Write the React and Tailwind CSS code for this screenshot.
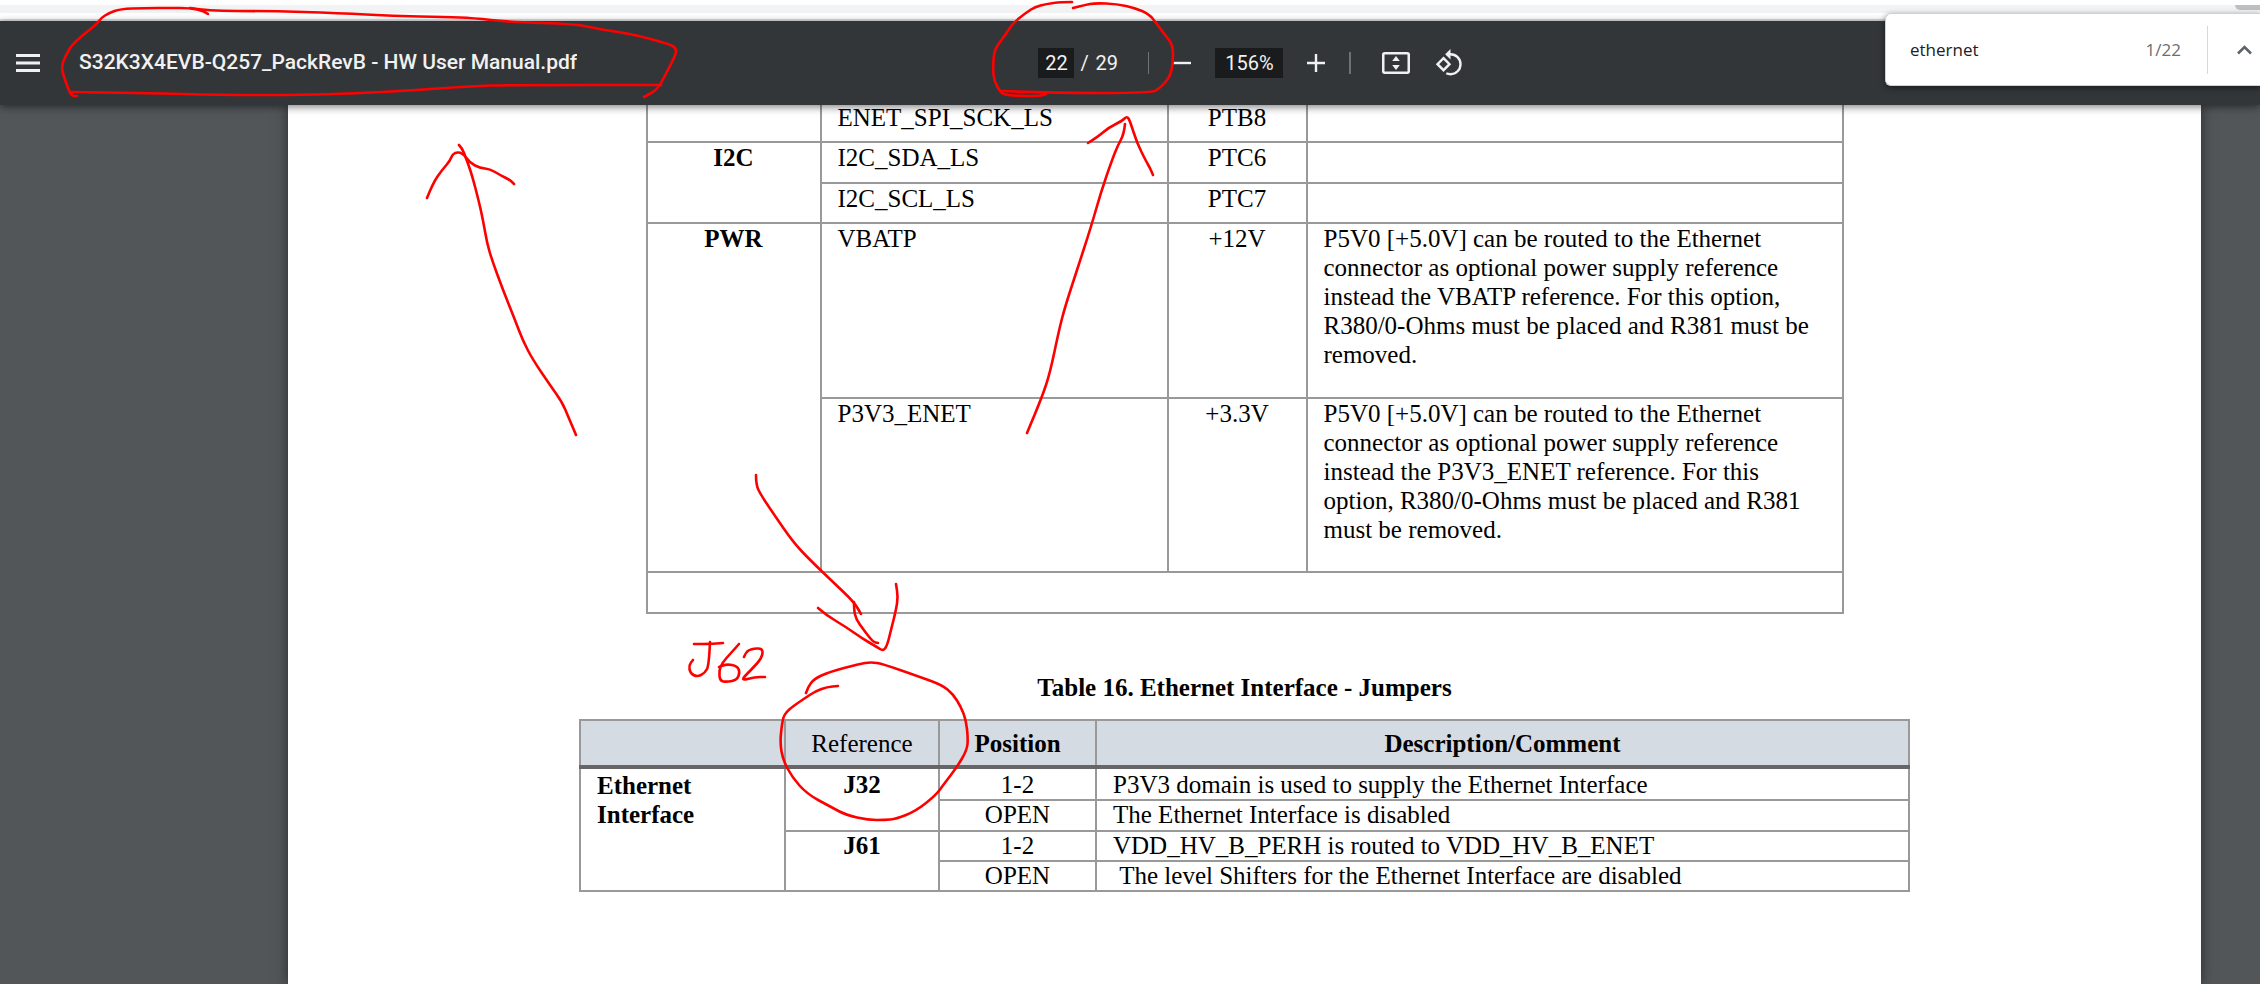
import { useState } from "react";

// red pen strokes, each a list of x,y points
const STROKES = [
  // file name
  [[208, 14], [204, 11], [190, 8], [170, 8], [145, 8], [120, 9], [109, 13], [101, 18], [97, 24], [73, 43], [66, 55], [61, 67], [65, 80], [71, 96], [77, 96]],
  [[190, 8], [207, 11], [268, 11], [339, 13], [393, 16], [446, 17], [473, 18], [509, 22], [576, 24], [598, 29], [625, 33], [643, 37], [669, 44], [676, 48], [676, 54], [669, 68], [660, 85], [655, 91], [644, 97]],
  [[71, 92], [143, 93], [223, 95], [286, 95], [339, 94], [402, 91], [473, 86], [509, 85], [661, 85]],
  // page number
  [[1072, 2], [1061, 2], [1046, 4], [1035, 7], [1027, 12], [1013, 23], [1006, 34], [997, 46], [994, 53], [993, 68], [994, 81], [1001, 93], [1007, 95], [1020, 96], [1040, 96], [1046, 94]],
  [[1001, 91], [1046, 93], [1152, 93], [1160, 88], [1170, 77], [1173, 63], [1173, 45], [1165, 35], [1157, 24], [1149, 14], [1135, 8], [1117, 4], [1095, 3], [1085, 5], [1073, 8]],
  // arrow to the file name
  [[459, 145], [462, 148], [466, 158], [472, 175], [479, 202], [483, 220], [487, 243], [492, 260], [503, 290], [515, 320], [523, 341], [533, 360], [550, 385], [562, 402], [568, 416], [576, 435]],
  [[427, 198], [433, 183], [442, 170], [450, 161], [453, 153], [462, 152], [470, 163], [480, 168], [490, 169], [500, 175], [510, 180], [514, 184]],
  // arrow to the page number
  [[1125, 124], [1124, 134], [1118, 145], [1112, 160], [1101, 192], [1091, 227], [1077, 270], [1065, 307], [1059, 330], [1050, 373], [1042, 397], [1027, 433]],
  [[1088, 143], [1099, 136], [1108, 128], [1122, 121], [1127, 116], [1130, 121], [1137, 143], [1146, 161], [1150, 168], [1153, 175]],
  // arrow to the jumper
  [[756, 475], [756, 485], [761, 495], [773, 513], [793, 542], [810, 560], [834, 583], [854, 602], [861, 614]],
  [[854, 602], [854, 610], [856, 619], [863, 629], [873, 642], [878, 643]],
  [[818, 608], [826, 615], [846, 627], [863, 639], [877, 647], [883, 651], [887, 646], [891, 630], [896, 610], [898, 597], [896, 584]],
  // J62 note
  [[694, 644], [710, 644], [723, 643]],
  [[710, 642], [709, 665], [705, 673], [697, 677], [690, 673], [689, 665], [693, 660]],
  [[739, 644], [731, 653], [722, 663], [719, 671], [720, 681], [727, 682], [737, 680], [740, 672], [737, 666], [727, 664], [719, 667]],
  [[744, 657], [746, 652], [751, 649], [763, 648], [762, 658], [751, 670], [740, 681], [755, 677], [765, 677]],
  // circled jumper
  [[806, 693], [808, 687], [814, 679], [829, 672], [859, 664], [871, 662], [883, 664], [920, 677], [942, 685], [953, 694], [961, 707], [966, 720], [968, 738], [967, 750], [957, 767], [944, 784], [936, 795], [916, 811], [896, 819], [885, 820], [868, 820], [846, 815], [831, 807], [807, 794], [792, 777], [783, 760], [780, 743], [782, 723], [785, 712], [805, 698], [816, 691], [827, 687], [838, 686]],
];

function toPath(points) {
  let d = `M${points[0][0]} ${points[0][1]}`;
  for (let i = 1; i < points.length - 1; i++) {
    const [x, y] = points[i];
    const [nx, ny] = points[i + 1];
    // curve through the midpoints so the pen line stays smooth
    d += ` Q${x} ${y} ${(x + nx) / 2} ${(y + ny) / 2}`;
  }
  const last = points[points.length - 1];
  return `${d} L${last[0]} ${last[1]}`;
}

function Ink() {
  return (
    <svg
      aria-hidden="true"
      width="2260"
      height="984"
      viewBox="0 0 2260 984"
      className="pointer-events-none absolute left-0 top-0 z-30 max-w-none fill-none stroke-[#ff0000]"
      strokeWidth="2.6"
      strokeLinecap="round"
      strokeLinejoin="round"
    >
      {STROKES.map((points, i) => (
        <path key={i} d={toPath(points)} />
      ))}
    </svg>
  );
}

function FindBar() {
  const [query, setQuery] = useState("ethernet");

  return (
    <div className="absolute right-0 top-[13px] z-20 flex h-[73px] w-[375px] items-center rounded-l-md border border-r-0 border-[#d0d1d2] bg-white pl-6 font-['Open_Sans','Noto_Sans',sans-serif] text-[17px] shadow-[0_2px_6px_rgba(0,0,0,0.45)]">
      <input
        type="text"
        aria-label="Find in page"
        value={query}
        onChange={(e) => setQuery(e.target.value)}
        className="w-0 flex-1 bg-transparent text-[#202124] outline-none"
      />
      <span className="text-[#6b6e72]">1/22</span>
      <span className="ml-[26px] h-12 w-px bg-[#d5d7da]" />
      <button aria-label="Previous match" className="ml-6 flex h-12 w-7 items-center justify-start">
        <svg width="24" height="24" viewBox="0 0 24 24" fill="none" stroke="#5f6368" strokeWidth="2.6">
          <path d="M6 15.500l6.500-6.500 6.500 6.500" />
        </svg>
      </button>
    </div>
  );
}

function Toolbar() {
  const [page, setPage] = useState("22");
  const [zoom, setZoom] = useState("156%");

  return (
    <header className="relative z-10 flex h-[84px] items-center bg-[#323639] pl-4 font-[Roboto,sans-serif] text-[20px] text-[#f1f1f1] shadow-[0_2px_8px_rgba(0,0,0,0.5)]">
      <div className="flex min-w-0 flex-[1023] items-center gap-[39px]">
        <button aria-label="Menu">
          <svg width="24" height="18" viewBox="0 0 24 18" fill="#f1f1f1">
            <path d="M0 0h24v3H0zM0 7.500h24v3H0zM0 15h24v3H0z" />
          </svg>
        </button>
        <h1 className="truncate text-[21px] font-medium">
          S32K3X4EVB-Q257_PackRevB - HW User Manual.pdf
        </h1>
      </div>
      <div className="flex shrink-0 items-center">
        <input
          type="text"
          aria-label="Page number"
          value={page}
          onChange={(e) => setPage(e.target.value)}
          className="h-[30px] w-9 bg-[#191b1c] text-center outline-none"
        />
        <span className="ml-1.5 w-[9px]">/</span>
        <span className="ml-1.5 w-[23px]">29</span>
        <span className="ml-[30px] h-[22px] w-px bg-[#6f7274]" />
        <button aria-label="Zoom out" className="ml-6">
          <svg width="18" height="18" viewBox="0 0 18 18" fill="#f1f1f1">
            <path d="M0 7.800h18v2.400H0z" />
          </svg>
        </button>
        <input
          type="text"
          aria-label="Zoom level"
          value={zoom}
          onChange={(e) => setZoom(e.target.value)}
          className="ml-6 h-[30px] w-[68px] bg-[#191b1c] text-center outline-none"
        />
        <button aria-label="Zoom in" className="ml-6">
          <svg width="18" height="18" viewBox="0 0 18 18" fill="#f1f1f1">
            <path d="M0 7.800h7.800V0h2.400v7.800H18v2.400h-7.800V18H7.800v-7.800H0z" />
          </svg>
        </button>
        <span className="ml-6 h-[22px] w-0.5 bg-[#6f7274]" />
        <button aria-label="Fit to page" className="ml-[30px]">
          <svg width="30" height="24" viewBox="0 0 30 24" fill="#f1f1f1">
            <rect x="2.250" y="2.250" width="25.500" height="19.500" rx="1.500" fill="none" stroke="#f1f1f1" strokeWidth="2.500" />
            <path d="M15 5l3.800 5h-7.600zM15 19l3.800-5h-7.600z" />
          </svg>
        </button>
        <button aria-label="Rotate counterclockwise" className="ml-6">
          <svg width="28" height="28" viewBox="0 0 28 28" fill="none" stroke="#f1f1f1" strokeWidth="2.400">
            <path d="M8.500 9.200l6 6-6 6-6-6z" />
            <path d="M13 5.200h2.500a9.900 9.900 0 0 1 0 20c-1.500 0-3-.3-4.200-.9" />
            <path d="M15.500 0v10.400L10.200 5.200z" fill="#f1f1f1" stroke="none" />
          </svg>
        </button>
      </div>
      <div className="flex-[797]" />
    </header>
  );
}

const cell = "border-2 border-[#999] px-4 py-0 align-top";

function SignalTable() {
  const top = "border-2 border-t-0 border-[#999] px-4 py-0 align-top";

  return (
    <table className="mx-auto w-[1198px] table-fixed border-collapse border-2 border-t-0 border-[#999]">
      <colgroup>
        <col className="w-[174px]" />
        <col className="w-[347px]" />
        <col className="w-[139px]" />
        <col />
      </colgroup>
      <tbody>
        <tr className="h-[37px] leading-[26px]">
          <th className={top}></th>
          <td className={top}>ENET_SPI_SCK_LS</td>
          <td className={`${top} text-center`}>PTB8</td>
          <td className={top}></td>
        </tr>
        <tr className="h-[41px]">
          <th rowSpan={2} className={cell}>I2C</th>
          <td className={cell}>I2C_SDA_LS</td>
          <td className={`${cell} text-center`}>PTC6</td>
          <td className={cell}></td>
        </tr>
        <tr className="h-10">
          <td className={cell}>I2C_SCL_LS</td>
          <td className={`${cell} text-center`}>PTC7</td>
          <td className={cell}></td>
        </tr>
        <tr className="h-[175px]">
          <th rowSpan={2} className={cell}>PWR</th>
          <td className={cell}>VBATP</td>
          <td className={`${cell} text-center`}>+12V</td>
          <td className={cell}>
            P5V0 [+5.0V] can be routed to the Ethernet connector as optional
            power supply reference instead the VBATP reference. For this option,
            R380/0-Ohms must be placed and R381 must be removed.
          </td>
        </tr>
        <tr className="h-[174px]">
          <td className={cell}>P3V3_ENET</td>
          <td className={`${cell} text-center`}>+3.3V</td>
          <td className={cell}>
            P5V0 [+5.0V] can be routed to the Ethernet connector as optional
            power supply reference instead the P3V3_ENET reference. For this
            option, R380/0-Ohms must be placed and R381 must be removed.
          </td>
        </tr>
        <tr className="h-[41px]">
          <td colSpan={4} className={cell}></td>
        </tr>
      </tbody>
    </table>
  );
}

function JumperTable() {
  const head = "border-2 border-b-4 border-[#999] border-b-[#666] px-4 py-0";
  const first = "border-2 border-[#999] px-4 pb-0 pt-0.5 align-top";

  return (
    <table className="mx-auto mt-[59px] w-[1331px] table-fixed border-collapse border-2 border-[#999]">
      <caption className="pb-[17px] font-bold">
        Table 16. Ethernet Interface - Jumpers
      </caption>
      <colgroup>
        <col className="w-[205px]" />
        <col className="w-[154px]" />
        <col className="w-[157px]" />
        <col />
      </colgroup>
      <thead className="bg-[#d5dbe3]">
        <tr className="h-[47px]">
          <th className={head}></th>
          <th className={`${head} font-normal`}>Reference</th>
          <th className={head}>Position</th>
          <th className={head}>Description/Comment</th>
        </tr>
      </thead>
      <tbody>
        <tr className="h-[33px] leading-7">
          <th rowSpan={4} className={`${first} text-left leading-[29px]`}>
            Ethernet Interface
          </th>
          <th rowSpan={2} className={first}>J32</th>
          <td className={`${first} text-center`}>1-2</td>
          <td className={first}>P3V3 domain is used to supply the Ethernet Interface</td>
        </tr>
        <tr className="h-[31px] leading-7">
          <td className={`${cell} text-center`}>OPEN</td>
          <td className={cell}>The Ethernet Interface is disabled</td>
        </tr>
        <tr className="h-[30px] leading-7">
          <th rowSpan={2} className={cell}>J61</th>
          <td className={`${cell} text-center`}>1-2</td>
          <td className={cell}>VDD_HV_B_PERH is routed to VDD_HV_B_ENET</td>
        </tr>
        <tr className="h-[30px] leading-7">
          <td className={`${cell} text-center`}>OPEN</td>
          <td className={`${cell} whitespace-pre-wrap`}>
            {" The level Shifters for the Ethernet Interface are disabled"}
          </td>
        </tr>
      </tbody>
    </table>
  );
}

export default function App() {
  return (
    <div className="relative flex h-screen flex-col overflow-hidden bg-white">
      {/* bottom edge of the browser chrome */}
      <div className="mt-[5px] flex h-2 shrink-0 justify-end bg-[#f1f3f4]">
        <div className="h-[5px] w-[25px] rounded-bl-lg bg-[#bdbfc1]" />
      </div>
      <div className="mt-1.5 h-0.5 shrink-0 bg-[#dadce0]" />
      <Toolbar />
      <main className="flex min-h-0 flex-1 overflow-hidden bg-[#525659] pl-72 pr-[59px]">
        <div className="flex-1 bg-white font-['Liberation_Serif',serif] text-[25px] leading-[29px] text-black shadow-[0_0_12px_rgba(0,0,0,0.5)]">
          <SignalTable />
          <JumperTable />
        </div>
      </main>
      <FindBar />
      <Ink />
    </div>
  );
}
